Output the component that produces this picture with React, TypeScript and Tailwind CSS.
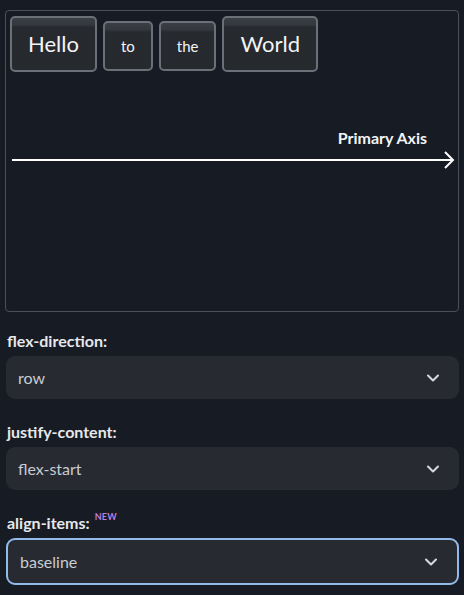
import { ChevronDown } from 'lucide-react';

const words = [
  { text: 'Hello', big: true },
  { text: 'to', big: false },
  { text: 'the', big: false },
  { text: 'World', big: true },
];

function Field({ label, value, isNew, focused }: { label: string; value: string; isNew?: boolean; focused?: boolean }) {
  return (
    <div className="flex flex-col">
      <div className="flex items-start h-[20px] pl-[1px]">
        <span className="text-[16px] font-bold text-[#e6e8eb] leading-[20px]">{label}</span>
        {isNew && <span className="ml-[5px] -mt-[1px] text-[9px] font-bold text-[#b87fe0] leading-none tracking-wide">NEW</span>}
      </div>
      <div
        className={`mt-[5px] flex items-center justify-between rounded-[9px] bg-[#272a31] pl-[12px] pr-[16px] ${
          focused ? 'h-[47px] border-2 border-[#92bbe9] pl-[11px] pr-[15px]' : 'h-[43px]'
        }`}
      >
        <span className="text-[16px] text-[#c9ccd1]">{value}</span>
        <ChevronDown size={20} strokeWidth={2.5} className="text-[#d4d7dc]" />
      </div>
    </div>
  );
}

export default function App() {
  return (
    <div className="min-h-[595px] bg-[#171b23] px-[5px] pt-[10px] font-['Lato','Noto_Sans',sans-serif]">
      {/* Preview */}
      <div className="h-[302px] rounded-[4px] border border-[#4b5059] px-[4px] pt-[5px] flex flex-col">
        <div className="flex items-baseline gap-[6px]">
          {words.map((w) => (
            <div
              key={w.text}
              className={`rounded-[5px] border-2 border-[#6a6f78] bg-[linear-gradient(to_bottom,#3b3e44_0px,#34373d_7px,#26292e_9px)] text-[#f3f4f6] ${
                w.big ? 'text-[22px] px-[16px] py-[12px] leading-[28px]' : 'text-[15px] px-[16px] py-[14px] leading-[18px]'
              }`}
            >
              {w.text}
            </div>
          ))}
        </div>
        <div className="mt-[56px] pr-[27px] text-right text-[16px] font-bold text-[#f3f4f6] leading-[20px]">Primary Axis</div>
        <svg className="mt-[2px] ml-[2px]" width="444" height="20" viewBox="0 0 444 20">
          <line x1="0" y1="10" x2="441" y2="10" stroke="#ffffff" strokeWidth="2" />
          <polyline points="433,2 441,10 433,18" fill="none" stroke="#ffffff" strokeWidth="2" />
        </svg>
      </div>

      {/* Controls */}
      <div className="mt-[19px] pl-[1px] flex flex-col gap-[23px]">
        <Field label="flex-direction:" value="row" />
        <Field label="justify-content:" value="flex-start" />
        <Field label="align-items:" value="baseline" isNew focused />
      </div>
    </div>
  );
}
